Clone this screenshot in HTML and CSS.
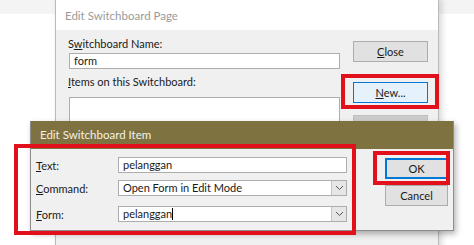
FILE: index.html
```html
<!DOCTYPE html>
<html lang="en">

<head>
    <meta charset="UTF-8">
    <title>Edit Switchboard Item</title>
    <link rel="stylesheet" href="styles.css">
</head>

<body>
    <div class="desk">
        <!-- dialog behind -->
        <div class="win page">
            <div class="page-title">Edit Switchboard Page</div>
            <div class="page-body">
                <div class="page-left">
                    <div class="lbl">S<u>w</u>itchboard Name:</div>
                    <div class="field name-field">form</div>
                    <div class="lbl items-lbl"><u>I</u>tems on this Switchboard:</div>
                    <div class="listbox"></div>
                </div>
                <div class="page-btns">
                    <div class="btn"><u>C</u>lose</div>
                    <div class="btn btn-new"><u>N</u>ew...</div>
                    <div class="btn btn-off">Edit...</div>
                </div>
            </div>
        </div>

        <!-- dialog in front -->
        <div class="win item">
            <div class="item-title">Edit Switchboard Item</div>
            <div class="item-body">
                <div class="item-rows">
                    <div class="row">
                        <div class="row-lbl"><u>T</u>ext:</div>
                        <div class="field">pelanggan</div>
                    </div>
                    <div class="row row-cmd">
                        <div class="row-lbl"><u>C</u>ommand:</div>
                        <div class="field combo">
                            <span>Open Form in Edit Mode</span>
                            <span class="drop">
                                <svg width="9" height="6" viewBox="0 0 9 6"><path d="M1 1 L4.5 4.5 L8 1" fill="none" stroke="#555" stroke-width="1"/></svg>
                            </span>
                        </div>
                    </div>
                    <div class="row row-form">
                        <div class="row-lbl"><u>F</u>orm:</div>
                        <div class="field combo">
                            <span>pelanggan<i class="caret"></i></span>
                            <span class="drop">
                                <svg width="9" height="6" viewBox="0 0 9 6"><path d="M1 1 L4.5 4.5 L8 1" fill="none" stroke="#555" stroke-width="1"/></svg>
                            </span>
                        </div>
                    </div>
                </div>
                <div class="item-btns">
                    <div class="btn btn-ok">OK</div>
                    <div class="btn">Cancel</div>
                </div>
            </div>
        </div>

        <!-- red highlight marks -->
        <div class="mark mark-new"></div>
        <div class="mark mark-rows"></div>
        <div class="mark mark-ok"></div>
    </div>
</body>

</html>
```

FILE: styles.css
```css
* {
    box-sizing: border-box;
}

body {
    margin: 0;
    background: #fff;
    font-family: Lato, "Noto Sans", sans-serif;
    font-size: 11px;
    color: #1a1a1a;
}

u {
    text-decoration: underline;
    text-underline-offset: 1px;
}

.desk {
    position: relative;
    width: 474px;
    height: 245px;
    overflow: hidden;
    background: linear-gradient(#f4f4f4 0, #f4f4f4 14px, #fff 14px);
}

.win {
    position: absolute;
}

/* back dialog */
.page {
    left: 55px;
    top: -1px;
    width: 384px;
    height: 260px;
    background: #f0f0f0;
    border: 1px solid #b9b9b9;
    box-shadow: 3px 0 6px rgba(0, 0, 0, 0.15);
}

.page-title {
    height: 30px;
    background: #fff;
    color: #9a9a9a;
    font-size: 11.5px;
    padding: 9px 0 0 9px;
}

.page-body {
    display: flex;
    padding: 5px 10px 0 12px;
}

.page-left {
    width: 273px;
}

.lbl {
    height: 17px;
    line-height: 17px;
}

.field {
    height: 16px;
    line-height: 14px;
    background: #fff;
    border: 1px solid #adadad;
    padding: 0 4px;
    margin-left: 1px;
}

.name-field {
    margin-top: 1px;
}

.items-lbl {
    margin-top: 4px;
}

.listbox {
    height: 80px;
    margin: 7px 0 0 1px;
    background: #fff;
    border: 1px solid #adadad;
}

.page-btns {
    display: flex;
    flex-direction: column;
    gap: 20px;
    margin-left: 13px;
    padding-top: 6px;
}

.btn {
    width: 75px;
    height: 21px;
    line-height: 19px;
    text-align: center;
    background: #e1e1e1;
    border: 1px solid #adadad;
}

.btn-new {
    background: #e5f1fb;
    border-color: #0078d7;
}

.btn-off {
    margin-top: -8px;
    background: #cccccc;
    border-color: #bfbfbf;
    color: #a0a0a0;
}

/* front dialog */
.item {
    left: 30px;
    top: 121px;
    width: 424px;
    height: 110px;
    background: #f0f0f0;
    border: 1px solid #8d8d8d;
    border-top: 0;
    box-shadow: 2px 3px 6px rgba(0, 0, 0, 0.3);
}

.item-title {
    height: 28px;
    background: #7f7241;
    color: #f4f1e6;
    font-size: 11.5px;
    padding: 7px 0 0 9px;
}

.item-body {
    display: flex;
    padding: 8px 0 0 5px;
}

.item-rows {
    width: 317px;
}

.row {
    display: flex;
    align-items: center;
}

.row-cmd {
    margin-top: 7px;
}

.row-form {
    margin-top: 10px;
}

.row-lbl {
    width: 82px;
}

.row .field {
    width: 229px;
    margin-left: 0;
}

.combo {
    display: flex;
    justify-content: space-between;
    padding-right: 0;
}

.drop {
    width: 15px;
    height: 14px;
    display: flex;
    align-items: center;
    justify-content: center;
    background: #e6e6e6;
    border-left: 1px solid #c4c4c4;
}

.caret {
    display: inline-block;
    width: 1px;
    height: 12px;
    background: #000;
    vertical-align: -2px;
}

.item-btns {
    display: flex;
    flex-direction: column;
    gap: 6px;
    padding-top: 1px;
    margin-left: 32px;
}

.item-btns .btn {
    width: 63px;
}

.btn-ok {
    border: 2px solid #0078d7;
    line-height: 17px;
}

/* red highlight boxes */
.mark {
    position: absolute;
    border: 4px solid #e2101b;
}

.mark-new {
    left: 341px;
    top: 74px;
    width: 98px;
    height: 35px;
}

.mark-rows {
    left: 14px;
    top: 144px;
    width: 342px;
    height: 91px;
}

.mark-ok {
    left: 373px;
    top: 151px;
    width: 77px;
    height: 34px;
}
```
